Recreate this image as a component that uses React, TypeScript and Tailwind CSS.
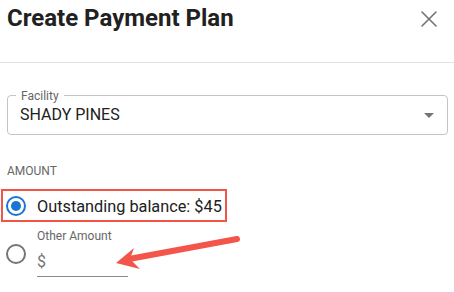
import { X } from "lucide-react";

function Radio({ checked }: { checked?: boolean }) {
  return (
    <span
      className={`flex h-5 w-5 shrink-0 items-center justify-center rounded-full border-2 ${
        checked ? "border-[#1976d2]" : "border-[#757575]"
      }`}
    >
      {checked && <span className="h-[10px] w-[10px] rounded-full bg-[#1976d2]" />}
    </span>
  );
}

export default function App() {
  return (
    <div className="relative h-[292px] w-[454px] overflow-hidden bg-white font-['Roboto',sans-serif] text-[#212121]">
      {/* header */}
      <div className="flex h-[63px] items-start justify-between border-b border-[#e0e0e0] pl-[7px] pr-[11px]">
        <h1 className="pt-[2px] text-[24px] font-bold leading-8">Create Payment Plan</h1>
        <X className="mt-[5px] h-7 w-7 text-[#757575]" strokeWidth={1.4} />
      </div>

      <div className="px-[7px]">
        {/* facility select */}
        <div className="relative mt-[32px] h-[40px] w-[441px] rounded-[4px] border border-[#c4c4c4] pl-[12px] pr-[12px] pt-[7px]">
          <span className="absolute left-[8px] top-[-8px] bg-white px-[5px] text-[12px] leading-4 text-[#666]">
            Facility
          </span>
          <div className="flex items-center justify-between">
            <span className="text-[16px] leading-6">SHADY PINES</span>
            <span className="mr-[1px] h-0 w-0 border-x-[5px] border-t-[5px] border-x-transparent border-t-[#757575]" />
          </div>
        </div>

        {/* amount */}
        <div className="mt-[28px] text-[12px] uppercase leading-4 text-[#666]">Amount</div>

        <div className="-ml-[6px] mt-[10px] flex h-[33px] w-[226px] items-center gap-[11px] border-2 border-[#f25546] pl-[3px]">
          <Radio checked />
          <span className="pt-[2px] text-[16.3px] leading-6">Outstanding balance: $45</span>
        </div>

        <div className="mt-[6px] flex items-center gap-[11px]">
          <span className="-ml-[1px] mt-[3px]">
            <Radio />
          </span>
          <div className="w-[91px]">
            <div className="text-[12px] leading-4 text-[#666]">Other Amount</div>
            <div className="mt-[6px] border-b border-[#8a8a8a] pb-[2px] text-[16px] leading-6 text-[#757575]">$</div>
          </div>
        </div>
      </div>

      {/* annotation arrow */}
      <svg className="pointer-events-none absolute left-0 top-0" width="454" height="292" viewBox="0 0 454 292">
        <line x1="237" y1="239" x2="129" y2="259" stroke="#f4554a" strokeWidth="6" strokeLinecap="round" />
        <polygon points="116,263 134,248 130,259 140,269" fill="#f4554a" />
      </svg>
    </div>
  );
}
